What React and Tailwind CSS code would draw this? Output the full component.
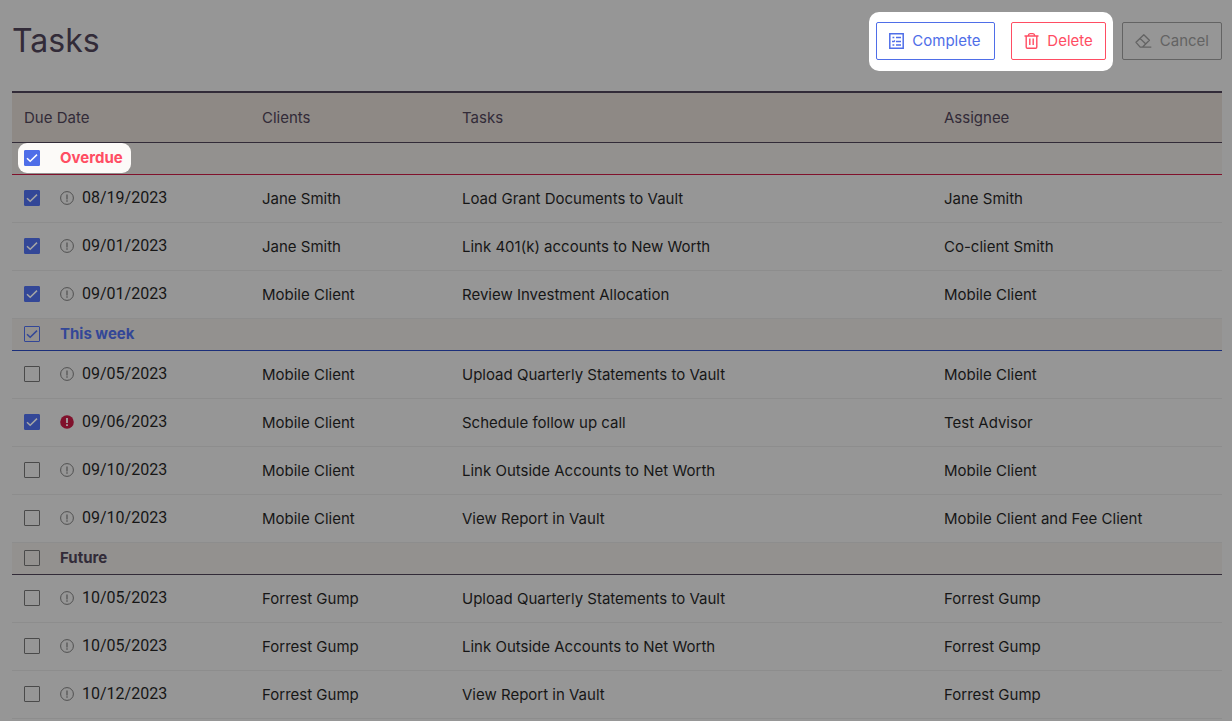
import { Fragment } from 'react';

const groups = [
    {
        name: 'Overdue',
        state: 'checked',
        highlighted: true,
        text: 'text-[#ff4d63]',
        border: 'border-[#80112c]',
        tasks: [
            { date: '08/19/2023', client: 'Jane Smith', task: 'Load Grant Documents to Vault', assignee: 'Jane Smith', checked: true },
            { date: '09/01/2023', client: 'Jane Smith', task: 'Link 401(k) accounts to New Worth', assignee: 'Co-client Smith', checked: true },
            { date: '09/01/2023', client: 'Mobile Client', task: 'Review Investment Allocation', assignee: 'Mobile Client', checked: true },
        ],
    },
    {
        name: 'This week',
        state: 'partial',
        text: 'text-[#334797]',
        border: 'border-[#1c2f7a]',
        tasks: [
            { date: '09/05/2023', client: 'Mobile Client', task: 'Upload Quarterly Statements to Vault', assignee: 'Mobile Client' },
            { date: '09/06/2023', client: 'Mobile Client', task: 'Schedule follow up call', assignee: 'Test Advisor', checked: true, urgent: true },
            { date: '09/10/2023', client: 'Mobile Client', task: 'Link Outside Accounts to Net Worth', assignee: 'Mobile Client' },
            { date: '09/10/2023', client: 'Mobile Client', task: 'View Report in Vault', assignee: 'Mobile Client and Fee Client' },
        ],
    },
    {
        name: 'Future',
        state: 'empty',
        text: 'text-[#322b38]',
        border: 'border-[#322b38]',
        tasks: [
            { date: '10/05/2023', client: 'Forrest Gump', task: 'Upload Quarterly Statements to Vault', assignee: 'Forrest Gump' },
            { date: '10/05/2023', client: 'Forrest Gump', task: 'Link Outside Accounts to Net Worth', assignee: 'Forrest Gump' },
            { date: '10/12/2023', client: 'Forrest Gump', task: 'View Report in Vault', assignee: 'Forrest Gump' },
        ],
    },
];

const boxStyles = {
    checked: 'border-[#334797] bg-[#334797]',
    bright: 'border-[#4f6ee8] bg-[#4f6ee8]',
    partial: 'border-[#334797]',
    empty: 'border-[#4a4a4a]',
};

const tickStyles = {
    checked: 'text-[#a5a5a5]',
    bright: 'text-white',
    partial: 'text-[#334797]',
};

function Checkbox({ look }) {
    return (
        <span className="grid size-4 shrink-0">
            <input
                type="checkbox"
                defaultChecked={look !== 'empty'}
                className={`col-start-1 row-start-1 size-4 appearance-none rounded-[1px] border ${boxStyles[look]}`}
            />
            {look !== 'empty' && (
                <svg viewBox="0 0 16 16" fill="none" stroke="currentColor" strokeWidth="1.5" className={`pointer-events-none col-start-1 row-start-1 size-4 ${tickStyles[look]}`}>
                    <path d="M3 8.2l3.2 3.1L13 4.6" />
                </svg>
            )}
        </span>
    );
}

function PriorityIcon({ urgent }) {
    if (urgent) {
        return (
            <svg viewBox="0 0 14 14" className="size-[14px] shrink-0">
                <circle cx="7" cy="7" r="6.8" fill="#80112c" />
                <path d="M7 3v5M7 9.3v1.8" stroke="#a5a5a5" strokeWidth="1.8" />
            </svg>
        );
    }

    return (
        <svg viewBox="0 0 14 14" fill="none" stroke="#505050" className="size-[14px] shrink-0">
            <circle cx="7" cy="7" r="6.4" />
            <path d="M7 3.4v5.2M7 9.2v1.5" strokeWidth="1.2" />
        </svg>
    );
}

function CompleteIcon() {
    return (
        <svg viewBox="0 0 15 18" fill="none" stroke="currentColor" strokeWidth="1.5" className="h-[18px] w-[15px]">
            <path d="M.8 1.8h13.4v14.4H.8z" />
            <path d="M3.5 5.5h1.8M7 5.5h5M3 9.5h2l1-1M7 9.5h5M3.5 13h1.8M7 13h5" strokeWidth="1.3" />
        </svg>
    );
}

function TrashIcon() {
    return (
        <svg viewBox="0 0 15 18" fill="none" stroke="currentColor" strokeWidth="1.4" className="h-[18px] w-[15px]">
            <path d="M.5 4h14M4.2 3.8c.2-1.4.8-2.2 1.8-2.2h3c1 0 1.6.8 1.8 2.2M2.2 4v11c0 .8.4 1.2 1.2 1.2h8.2c.8 0 1.2-.4 1.2-1.2V4M5.8 6.5V13M9.2 6.5V13" />
        </svg>
    );
}

function EraserIcon() {
    return (
        <svg viewBox="0 0 17 16" fill="none" stroke="currentColor" strokeWidth="1.3" className="h-4 w-[17px]">
            <path d="M1 9.3l7.8-7.6 5.6 5.6-7 6.9H5.2zM5 5.4l5.8 5.6M5 14.2h11.3" strokeLinejoin="round" />
        </svg>
    );
}

function ActionButton({ icon, className, children }) {
    return (
        <button type="button" className={`flex h-[38px] items-center gap-2 rounded-[2px] border px-3 ${className}`}>
            {icon}
            {children}
        </button>
    );
}

export default function App() {
    return (
        <main className="min-h-screen bg-[#969696] pt-3 pr-[10px] pl-3 font-[Inter,sans-serif] text-[15px] leading-6 text-[#161616]">
            <header className="flex h-[79px] items-start justify-between">
                <h1 className="pt-1 text-[32px] leading-[50px] text-[#322b38]">Tasks</h1>
                <div className="flex items-start gap-[9px]">
                    <div className="flex gap-4 rounded-[10px] bg-white px-[7px] pt-[10px] pb-[11px]">
                        <ActionButton icon={<CompleteIcon />} className="min-w-[119px] border-[#4f6ee8] text-[#4f6ee8]">Complete</ActionButton>
                        <ActionButton icon={<TrashIcon />} className="border-[#ff4d63] text-[#ff4d63]">Delete</ActionButton>
                    </div>
                    <ActionButton icon={<EraserIcon />} className="mt-[10px] border-[#636363] text-[#636363]">Cancel</ActionButton>
                </div>
            </header>

            <table className="w-full table-fixed border-separate border-spacing-0 text-left">
                <thead className="bg-[#8e8985] text-[#322b38]">
                    <tr className="[&>th]:h-[52px] [&>th]:border-t-2 [&>th]:border-b [&>th]:border-[#322b38] [&>th]:px-3 [&>th]:font-normal">
                        <th className="w-[238px]">Due Date</th>
                        <th className="w-[200px]">Clients</th>
                        <th>Tasks</th>
                        <th className="w-[290px]">Assignee</th>
                    </tr>
                </thead>
                <tbody>
                    {groups.map((group) => (
                        <Fragment key={group.name}>
                            <tr className="bg-[#93918f]">
                                <th colSpan={4} className={`h-8 border-b px-[6px] py-0 align-top font-bold ${group.text} ${group.border}`}>
                                    <label className={`flex h-[30px] w-fit items-center gap-5 rounded-[9px] pr-2 pl-[6px] ${group.highlighted ? 'bg-[#fcfaf8]' : ''}`}>
                                        <Checkbox look={group.highlighted ? 'bright' : group.state} />
                                        {group.name}
                                    </label>
                                </th>
                            </tr>
                            {group.tasks.map((item, i) => (
                                <tr key={i} className="[&>td]:h-12 [&>td]:border-b [&>td]:border-[#8d8d8d] [&>td]:px-3 [&>td]:py-0">
                                    <td className="align-top">
                                        <label className="flex h-[46px] items-center">
                                            <Checkbox look={item.checked ? 'checked' : 'empty'} />
                                            <span className="flex items-center gap-2 pl-5 font-[Roboto,sans-serif] text-base">
                                                <PriorityIcon urgent={item.urgent} />
                                                {item.date}
                                            </span>
                                        </label>
                                    </td>
                                    <td>{item.client}</td>
                                    <td>{item.task}</td>
                                    <td>{item.assignee}</td>
                                </tr>
                            ))}
                        </Fragment>
                    ))}
                </tbody>
            </table>
        </main>
    );
}
